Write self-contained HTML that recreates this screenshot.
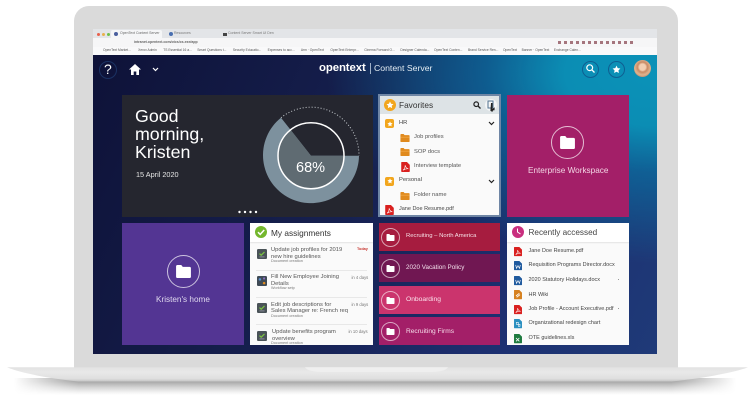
<!DOCTYPE html>
<html lang="en">
<head>
<meta charset="utf-8">
<title>OpenText Content Server</title>
<style>
html,body{margin:0;padding:0;background:#fff}
body{width:750px;height:402px;position:relative;overflow:hidden;font-family:"Liberation Sans",sans-serif}
.a{position:absolute}
.t{position:absolute;white-space:nowrap;line-height:1}
svg{position:absolute;overflow:visible}
</style>
</head>
<body>
<svg width="0" height="0" style="position:absolute">
<defs>
<symbol id="fw" viewBox="0 0 16 14"><path d="M0 1.500C0 .7.600 0 1.400 0h4.200l1.600 2h7.400c.8 0 1.400.6 1.400 1.400v9.200c0 .8-.6 1.400-1.400 1.400H1.400C.6 14 0 13.400 0 12.600z" fill="#fff"/></symbol>
<symbol id="fo" viewBox="0 0 16 14"><path d="M0 1.500C0 .7.600 0 1.400 0h4.200l1.600 2h7.400c.8 0 1.400.6 1.400 1.400v9.200c0 .8-.6 1.400-1.400 1.400H1.400C.6 14 0 13.400 0 12.600z" fill="#e08a1e"/><path d="M0 5h16v1.200H0z" fill="#f4ad4a"/></symbol>
<symbol id="pdf" viewBox="0 0 12 14"><path d="M0 1C0 .4.400 0 1 0h7l4 4v9c0 .6-.4 1-1 1H1c-.6 0-1-.4-1-1z" fill="#d9201f"/><path d="M2.500 11.500C4.500 10 5.500 7 5.500 4.500 6 7.500 7.500 9 10 9.500 7.500 9.300 4.500 10 2.500 11.500z" fill="none" stroke="#fff" stroke-width=".8"/></symbol>
<symbol id="star" viewBox="0 0 12 12"><path d="M6 .8l1.600 3.300 3.600.5-2.600 2.500.6 3.600L6 9l-3.200 1.700.6-3.600L.8 4.600l3.600-.5z" fill="#fff"/></symbol>
<symbol id="task" viewBox="0 0 12 12"><rect width="12" height="12" rx="1.500" fill="#4a5358"/><path d="M3 5.500l2 2 4-4" fill="none" stroke="#7ac143" stroke-width="1.500"/><path d="M3 9.500h6" stroke="#aab" stroke-width=".8"/></symbol>
<symbol id="word" viewBox="0 0 12 14"><path d="M0 1C0 .4.400 0 1 0h7l4 4v9c0 .6-.4 1-1 1H1c-.6 0-1-.4-1-1z" fill="#1f5a9e"/><path d="M2.500 6l1.300 5 2.200-4 2.200 4 1.300-5" fill="none" stroke="#fff" stroke-width="1"/></symbol>
</defs>
</svg>

<!-- laptop -->
<div class="a" style="left:73.500px;top:6px;width:604px;height:362px;background:#dadada;border-radius:15px 15px 0 0"></div>
<div class="a" style="left:14px;top:378px;width:722px;height:17px;background:linear-gradient(180deg,#9c9c9c 0,#a8a8a8 22%,#d4d4d4 55%,#f4f4f4 85%,#fff 100%);-webkit-mask-image:linear-gradient(90deg,transparent 0,#000 9%,#000 91%,transparent 100%);mask-image:linear-gradient(90deg,transparent 0,#000 9%,#000 91%,transparent 100%)"></div>
<svg width="750" height="402" style="left:0;top:0">
<defs><linearGradient id="bs" x1="0" y1="0" x2="0" y2="1"><stop offset="0" stop-color="#e2e2e2"/><stop offset=".35" stop-color="#e9e9e9"/><stop offset=".8" stop-color="#dfdfdf"/><stop offset="1" stop-color="#c4c4c4"/></linearGradient></defs>
<path d="M7 367.300H748C742 370 715 377 672 381.500H78C35 377 13 370 7 367.300z" fill="url(#bs)"/>
<path d="M305 367.300H448C446 370.500 440 372 432 372H321C313 372 307 370.500 305 367.300z" fill="#efefef"/>
</svg>

<!-- browser chrome -->
<div class="a" style="left:93px;top:29px;width:564px;height:9px;background:#e3e5e8"></div>
<div class="a" style="left:111px;top:30px;width:51px;height:8px;background:#f5f6f7;border-radius:2px 2px 0 0"></div>
<div class="a" style="left:93px;top:38px;width:564px;height:9px;background:#f6f6f7"></div>
<div class="a" style="left:93px;top:47px;width:564px;height:8px;background:#f9f9fa"></div>
<div class="a" style="left:97px;top:32.500px;width:3px;height:3px;background:#e8604c;border-radius:50%"></div>
<div class="a" style="left:102px;top:32.500px;width:3px;height:3px;background:#e8b04c;border-radius:50%"></div>
<div class="a" style="left:107px;top:32.500px;width:3px;height:3px;background:#6cc04a;border-radius:50%"></div>
<div class="a" style="left:114px;top:32px;width:4px;height:4px;background:#4a5f9e;border-radius:50%"></div>
<div class="t" style="left:120px;top:32px;font-size:3.500px;color:#666">OpenText Content Server</div>
<div class="a" style="left:169px;top:32px;width:4px;height:4px;background:#4a6fb0;border-radius:50%"></div>
<div class="t" style="left:174px;top:32px;font-size:3.500px;color:#777">Resources</div>
<div class="a" style="left:223px;top:32.500px;width:3.500px;height:3px;background:#444"></div>
<div class="t" style="left:228px;top:32px;font-size:3.500px;color:#777">Content Server Smart UI Den</div>
<div class="t" style="left:134px;top:41px;font-size:3.500px;color:#666;font-weight:bold">intranet.opentext.com/otcs/cs.exe/app</div>
<div class="t" style="left:103px;top:48.500px;font-size:3.300px;color:#555">OpenText Market... &nbsp; &nbsp; &nbsp; &nbsp;Xerox Admin &nbsp; &nbsp; &nbsp; TS Essential 16 a... &nbsp; &nbsp; &nbsp;Smart Questions t... &nbsp; &nbsp; &nbsp; Security Educatio... &nbsp; &nbsp; &nbsp; Expenses to acc... &nbsp; &nbsp; &nbsp; Arm · OpenText &nbsp; &nbsp; &nbsp; OpenText Enterpr... &nbsp; &nbsp; &nbsp;Cinema Forward O... &nbsp; &nbsp; &nbsp;Designer Calenda... &nbsp; &nbsp; OpenText Conten... &nbsp; &nbsp; &nbsp;Brand Service Ren... &nbsp; &nbsp; OpenText &nbsp; &nbsp; Banner · OpenText &nbsp; &nbsp; Exchange Calen...</div>
<div class="a" style="left:558px;top:40.500px;width:78px;height:3.500px;background:repeating-linear-gradient(90deg,#a5757d 0 3px,#f6f6f7 3px 6px)"></div>

<!-- screen -->
<div class="a" style="left:93px;top:54.500px;width:564px;height:299.500px;background:
radial-gradient(ellipse 330px 190px at 100% 6%,#0b92b8 0,#0b8db4 28%,rgba(11,110,160,.75) 52%,rgba(20,60,120,0) 100%),
linear-gradient(115deg,#0e1238 0,#16204f 45%,#1c2f70 75%,#1f3a78 100%)"></div>

<!-- header -->
<div class="a" style="left:99px;top:60.500px;width:16px;height:16px;border:1px solid #1b3263;border-radius:50%"></div>
<div class="t" style="left:104px;top:62px;font-size:14px;color:#fff">?</div>
<svg width="12" height="11" viewBox="0 0 12 11" style="left:129px;top:63.500px"><path d="M6 0L12 5.500H10V11H7.300V7.500H4.700V11H2V5.500H0z" fill="#fff"/></svg>
<svg width="7" height="5" viewBox="0 0 7 5" style="left:152px;top:66.500px"><path d="M1 1l2.500 2.500L6 1" fill="none" stroke="#fff" stroke-width="1.200"/></svg>
<div class="t" style="left:319px;top:62.500px;font-size:11.400px;font-weight:bold;color:#fff;letter-spacing:-.1px">opentext</div>
<div class="a" style="left:370px;top:63px;width:1px;height:11px;background:#9fb2c9"></div>
<div class="t" style="left:374px;top:64.300px;font-size:8.700px;color:#e4edf3">Content Server</div>
<div class="a" style="left:581.500px;top:60.500px;width:15.500px;height:15.500px;border:1px solid #0f5f92;border-radius:50%"></div>
<svg width="9" height="9" viewBox="0 0 9 9" style="left:585.500px;top:64px"><circle cx="3.700" cy="3.700" r="2.900" fill="none" stroke="#fff" stroke-width="1.200"/><path d="M5.800 5.800L8.500 8.500" stroke="#fff" stroke-width="1.300"/></svg>
<div class="a" style="left:607.500px;top:60.500px;width:15.500px;height:15.500px;border:1px solid #0f5f92;border-radius:50%"></div>
<svg width="9" height="9" style="left:612px;top:64.500px"><use href="#star" width="9" height="9"/></svg>
<div class="a" style="left:634px;top:60px;width:17px;height:17px;border-radius:50%;background:radial-gradient(circle at 50% 42%,#f3cfb2 0 24%,#c98a64 38%,#e0b48f 60%,#9a5a42 100%)"></div>

<!-- hero -->
<div class="a" style="left:122px;top:95px;width:251px;height:122px;background:#25262f"></div>
<div class="t" style="left:135px;top:107px;font-size:17.800px;line-height:18px;color:#fff;white-space:normal;width:90px">Good morning, Kristen</div>
<div class="t" style="left:136px;top:171px;font-size:7.300px;color:#e6e6e6">15 April 2020</div>
<svg width="251" height="122" viewBox="0 0 251 122" style="left:122px;top:95px">
<path d="M237 60.700A48 48 0 1 1 159 22.700L189 60.700z" fill="#7d919e"/>
<path d="M189 60.700L168.500 34.800A33 33 0 1 0 222 60.700z" fill="#5f6b72"/>
<path d="M159 22.700A48 48 0 0 1 237 60.700" fill="none" stroke="#c7ccd0" stroke-width="1" stroke-dasharray="1 2"/>
<circle cx="189" cy="60.700" r="33" fill="none" stroke="#fff" stroke-width="1.500"/>
<circle cx="117.500" cy="117" r="1.200" fill="#fff"/><circle cx="123" cy="117" r="1.200" fill="#fff"/><circle cx="128.500" cy="117" r="1.200" fill="#fff"/><circle cx="134" cy="117" r="1.200" fill="#fff"/>
</svg>
<div class="t" style="left:296px;top:160.500px;font-size:14.500px;color:#fff">68%</div>

<!-- favorites -->
<div class="a" style="left:378px;top:94px;width:119px;height:119px;background:#fafafa;border:2px solid #6f86a5"></div>
<div class="a" style="left:380px;top:96px;width:119px;height:18px;background:#dde3e6"></div>
<div class="a" style="left:384px;top:98.500px;width:12px;height:12px;background:#f2a61d;border-radius:50%"></div>
<svg width="8" height="8" style="left:386px;top:100.500px"><use href="#star" width="8" height="8"/></svg>
<div class="t" style="left:399px;top:100.500px;font-size:8.300px;color:#333">Favorites</div>
<svg width="8" height="8" viewBox="0 0 8 8" style="left:472.500px;top:101px"><circle cx="3.200" cy="3.200" r="2.300" fill="none" stroke="#222" stroke-width="1.200"/><path d="M5 5l2.500 2.500" stroke="#222" stroke-width="1.300"/></svg>
<div class="a" style="left:485px;top:99px;width:12px;height:12px;background:#f4f5f6;border-radius:50%"></div>
<svg width="10" height="12" viewBox="0 0 10 12" style="left:488px;top:101px"><path d="M0 0h5v7H0z" fill="none" stroke="#51718f" stroke-width="1"/><path d="M3 2l1.500 0 0 6 2.200-1.800-.2 3-1.500.2-.6 1.500-2-1z" fill="#222"/></svg>

<div class="a" style="left:385px;top:119px;width:9px;height:9px;background:#f2a61d;border-radius:2px"></div>
<svg width="6" height="6" style="left:386.500px;top:120.500px"><use href="#star" width="6" height="6"/></svg>
<div class="t" style="left:399px;top:120.700px;font-size:5.800px;color:#444">HR</div>
<svg width="7" height="5" viewBox="0 0 7 5" style="left:487.500px;top:121px"><path d="M1 1l2.500 2.500L6 1" fill="none" stroke="#222" stroke-width="1.200"/></svg>
<svg width="10" height="8" style="left:400px;top:134px"><use href="#fo" width="10" height="8"/></svg>
<div class="t" style="left:414px;top:135.300px;font-size:5.800px;color:#555">Job profiles</div>
<svg width="10" height="8" style="left:400px;top:148px"><use href="#fo" width="10" height="8"/></svg>
<div class="t" style="left:414px;top:149.700px;font-size:5.800px;color:#555">SOP docs</div>
<svg width="9" height="10" style="left:400.500px;top:162px"><use href="#pdf" width="9" height="10"/></svg>
<div class="t" style="left:414px;top:164px;font-size:5.800px;color:#555">Interview template</div>
<div class="a" style="left:385px;top:176.700px;width:9px;height:9px;background:#f2a61d;border-radius:2px"></div>
<svg width="6" height="6" style="left:386.500px;top:178.200px"><use href="#star" width="6" height="6"/></svg>
<div class="t" style="left:399px;top:178.400px;font-size:5.800px;color:#444">Personal</div>
<svg width="7" height="5" viewBox="0 0 7 5" style="left:487.500px;top:179px"><path d="M1 1l2.500 2.500L6 1" fill="none" stroke="#222" stroke-width="1.200"/></svg>
<svg width="10" height="8" style="left:400px;top:192px"><use href="#fo" width="10" height="8"/></svg>
<div class="t" style="left:414px;top:192.700px;font-size:5.800px;color:#555">Folder name</div>
<svg width="9" height="10" style="left:385px;top:205px"><use href="#pdf" width="9" height="10"/></svg>
<div class="t" style="left:399px;top:207.200px;font-size:5.500px;color:#444">Jane Doe Resume.pdf</div>

<!-- enterprise -->
<div class="a" style="left:507px;top:95px;width:122px;height:122px;background:#a31f68"></div>
<div class="a" style="left:551px;top:126px;width:31px;height:31px;border:1px solid rgba(255,255,255,.7);border-radius:50%"></div>
<svg width="17" height="13" style="left:559px;top:136px"><use href="#fw" width="17" height="13"/></svg>
<div class="t" style="left:528px;top:167px;font-size:8.200px;color:#f3d6e5">Enterprise Workspace</div>

<!-- kristen's home -->
<div class="a" style="left:122px;top:223px;width:122px;height:122px;background:#533593"></div>
<div class="a" style="left:167px;top:255px;width:31px;height:31px;border:1px solid rgba(255,255,255,.7);border-radius:50%"></div>
<svg width="17" height="13" style="left:175px;top:265px"><use href="#fw" width="17" height="13"/></svg>
<div class="t" style="left:156px;top:296px;font-size:8.200px;color:#dfd8ee">Kristen's home</div>

<!-- assignments -->
<div class="a" style="left:250px;top:223px;width:123px;height:122px;background:#fafafa;overflow:hidden">
  <div class="a" style="left:0;top:0;width:123px;height:19px;background:#fff;box-shadow:0 1px 1px #e4e4e4"></div>
  <div class="a" style="left:5px;top:3px;width:12px;height:12px;background:#74b72e;border-radius:50%"></div>
  <svg width="12" height="12" viewBox="0 0 12 12" style="left:5px;top:3px"><path d="M3 6.200l2.200 2.200L9.200 4" fill="none" stroke="#fff" stroke-width="1.500"/></svg>
  <div class="t" style="left:21px;top:5.500px;font-size:8.300px;color:#333">My assignments</div>

  <svg width="10" height="10" style="left:7px;top:25.700px"><use href="#task" width="10" height="10"/></svg>
  <div class="t" style="left:21px;top:24.400px;font-size:5.800px;line-height:6.500px;color:#555">Update job profiles for 2019<br>new hire guidelines</div>
  <div class="t" style="left:21px;top:37.400px;font-size:3.800px;color:#777">Document creation</div>
  <div class="t" style="left:107px;top:25px;font-size:3.800px;font-weight:bold;color:#c7352f">Today</div>
  <div class="a" style="left:6px;top:46.700px;width:111px;height:1px;background:#e8e8e8"></div>

  <svg width="10" height="10" viewBox="0 0 12 12" style="left:7px;top:53.300px"><rect width="12" height="12" rx="1.500" fill="#3f4a55"/><circle cx="3.500" cy="4" r="1.500" fill="#5b8fd0"/><circle cx="8.500" cy="3" r="1.300" fill="#8b6fc0"/><circle cx="8.500" cy="8.500" r="1.500" fill="#e08a1e"/></svg>
  <div class="t" style="left:21px;top:51.400px;font-size:5.800px;line-height:6.500px;color:#555">Fill New Employee Joining<br>Details</div>
  <div class="t" style="left:21px;top:64.400px;font-size:3.800px;color:#777">Workflow setp</div>
  <div class="t" style="left:101.500px;top:52.600px;font-size:4.200px;color:#777">in 4 days</div>
  <div class="a" style="left:6px;top:74px;width:111px;height:1px;background:#e8e8e8"></div>

  <svg width="10" height="10" style="left:7px;top:80.300px"><use href="#task" width="10" height="10"/></svg>
  <div class="t" style="left:21px;top:78.700px;font-size:5.800px;line-height:6.500px;color:#555">Edit job descriptions for<br>Sales Manager re: French req</div>
  <div class="t" style="left:21px;top:92px;font-size:3.800px;color:#777">Document creation</div>
  <div class="t" style="left:101.500px;top:79.800px;font-size:4.200px;color:#777">in 9 days</div>
  <div class="a" style="left:6px;top:101.300px;width:111px;height:1px;background:#e8e8e8"></div>

  <svg width="10" height="10" style="left:7px;top:107.700px"><use href="#task" width="10" height="10"/></svg>
  <div class="t" style="left:22px;top:106px;font-size:5.800px;line-height:6.500px;color:#555">Update benefits program<br>overview</div>
  <div class="t" style="left:21px;top:119.400px;font-size:3.800px;color:#777">Document creation</div>
  <div class="t" style="left:98.500px;top:107px;font-size:4.200px;color:#777">in 10 days</div>
</div>

<!-- small tiles -->
<div class="a" style="left:379px;top:223px;width:121px;height:28px;background:#a61c3f"></div>
<div class="a" style="left:379px;top:254px;width:121px;height:28px;background:#701752"></div>
<div class="a" style="left:379px;top:286px;width:121px;height:28px;background:#cb346d"></div>
<div class="a" style="left:379px;top:317px;width:121px;height:28px;background:#a31f68"></div>
<div class="a" style="left:381px;top:228px;width:17px;height:17px;border:.8px solid rgba(255,255,255,.6);border-radius:50%"></div>
<svg width="9" height="7" style="left:386px;top:233.500px"><use href="#fw" width="9" height="7"/></svg>
<div class="t" style="left:406px;top:234.300px;font-size:5.900px;color:#f6dfe5">Recruiting – North America</div>
<div class="a" style="left:381px;top:259px;width:17px;height:17px;border:.8px solid rgba(255,255,255,.6);border-radius:50%"></div>
<svg width="9" height="7" style="left:386px;top:264.500px"><use href="#fw" width="9" height="7"/></svg>
<div class="t" style="left:406px;top:265px;font-size:6.300px;color:#f3e0ec">2020 Vacation Policy</div>
<div class="a" style="left:381px;top:291px;width:17px;height:17px;border:.8px solid rgba(255,255,255,.6);border-radius:50%"></div>
<svg width="9" height="7" style="left:386px;top:296.500px"><use href="#fw" width="9" height="7"/></svg>
<div class="t" style="left:406px;top:296.600px;font-size:6.700px;color:#fbe3ec">Onboarding</div>
<div class="a" style="left:381px;top:322px;width:17px;height:17px;border:.8px solid rgba(255,255,255,.6);border-radius:50%"></div>
<svg width="9" height="7" style="left:386px;top:328px"><use href="#fw" width="9" height="7"/></svg>
<div class="t" style="left:406px;top:328.600px;font-size:6.600px;color:#f6dcea">Recruiting Firms</div>

<!-- recent -->
<div class="a" style="left:507px;top:223px;width:122px;height:122px;background:#fafafa;overflow:hidden">
  <div class="a" style="left:0;top:0;width:122px;height:19px;background:#fff;box-shadow:0 1px 1px #e4e4e4"></div>
  <div class="a" style="left:5px;top:3px;width:12px;height:12px;background:#c92f7f;border-radius:50%"></div>
  <svg width="12" height="12" viewBox="0 0 12 12" style="left:5px;top:3px"><path d="M5.500 2.500V6l3 2" fill="none" stroke="#fff" stroke-width="1"/></svg>
  <div class="t" style="left:21.500px;top:5.500px;font-size:8.200px;color:#444">Recently accessed</div>
  <svg width="8" height="9.300" style="left:6.700px;top:23.700px"><use href="#pdf" width="8" height="9.300"/></svg>
  <div class="t" style="left:21.500px;top:25.500px;font-size:5.500px;color:#444">Jane Doe Resume.pdf</div>
  <svg width="8" height="9.300" style="left:6.700px;top:38.300px"><use href="#word" width="8" height="9.300"/></svg>
  <div class="t" style="left:21.500px;top:40px;font-size:5.500px;color:#444">Requisition Programs Director.docx</div>
  <svg width="8" height="9.300" style="left:6.700px;top:53px"><use href="#word" width="8" height="9.300"/></svg>
  <div class="t" style="left:21.500px;top:55.200px;font-size:5.500px;color:#444">2020 Statutory Holidays.docx</div>
  <svg width="8" height="9.300" viewBox="0 0 12 14" style="left:6.700px;top:67.300px"><path d="M0 1C0 .4.400 0 1 0h7l4 4v9c0 .6-.4 1-1 1H1c-.6 0-1-.4-1-1z" fill="#d6801f"/><path d="M3 9l5-4M4 11l5-4" stroke="#fff" stroke-width="1.300"/></svg>
  <div class="t" style="left:21.500px;top:70px;font-size:5.500px;color:#444">HR Wiki</div>
  <svg width="8" height="9.300" style="left:6.700px;top:81.700px"><use href="#pdf" width="8" height="9.300"/></svg>
  <div class="t" style="left:21.500px;top:84.200px;font-size:5.500px;color:#444">Job Profile - Account Executive.pdf</div>
  <svg width="8" height="9.300" viewBox="0 0 12 14" style="left:6.700px;top:96px"><path d="M0 1C0 .4.400 0 1 0h7l4 4v9c0 .6-.4 1-1 1H1c-.6 0-1-.4-1-1z" fill="#2a8fc0"/><path d="M3.500 5h3v3h-3zM6.500 8h2.500v3H6.500z" fill="none" stroke="#fff" stroke-width=".8"/></svg>
  <div class="t" style="left:21.500px;top:98.200px;font-size:5.500px;color:#444">Organizational redesign chart</div>
  <svg width="8" height="9.300" viewBox="0 0 12 14" style="left:6.700px;top:110.700px"><path d="M0 1C0 .4.400 0 1 0h7l4 4v9c0 .6-.4 1-1 1H1c-.6 0-1-.4-1-1z" fill="#1e7a3f"/><path d="M3 6l5 5M8 6l-5 5" stroke="#fff" stroke-width="1.200"/></svg>
  <div class="t" style="left:21.500px;top:113px;font-size:5.500px;color:#444">OTE guidelines.xls</div>
  <div class="a" style="left:110.500px;top:56px;width:1px;height:1px;background:#999"></div>
  <div class="a" style="left:110.500px;top:85px;width:1px;height:1px;background:#999"></div>
</div>
</body>
</html>
